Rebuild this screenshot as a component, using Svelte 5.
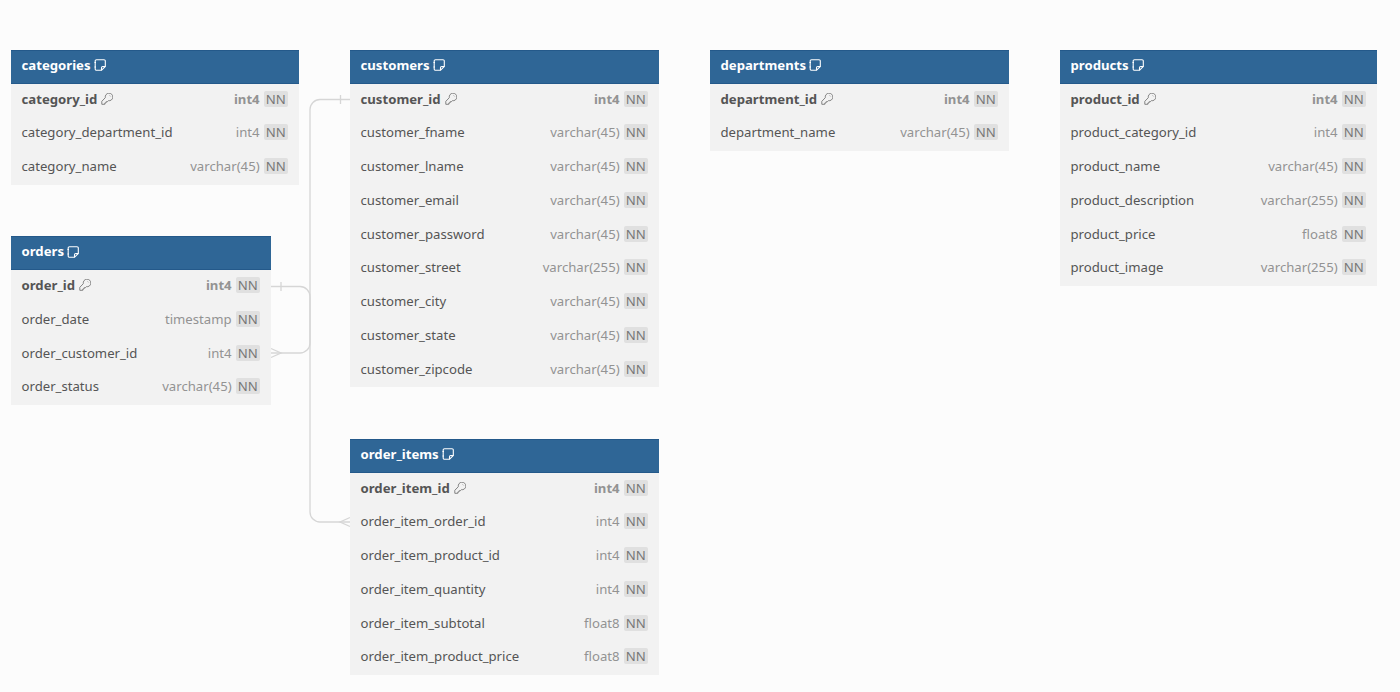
<script>
  const tables = [
    { name: 'categories', x: 11, y: 50, w: 288, rows: [
      ['category_id', 'int4', true], ['category_department_id', 'int4'], ['category_name', 'varchar(45)'] ] },
    { name: 'orders', x: 11, y: 236.4, w: 260, rows: [
      ['order_id', 'int4', true], ['order_date', 'timestamp'], ['order_customer_id', 'int4'], ['order_status', 'varchar(45)'] ] },
    { name: 'customers', x: 350, y: 50, w: 309, rows: [
      ['customer_id', 'int4', true], ['customer_fname', 'varchar(45)'], ['customer_lname', 'varchar(45)'],
      ['customer_email', 'varchar(45)'], ['customer_password', 'varchar(45)'], ['customer_street', 'varchar(255)'],
      ['customer_city', 'varchar(45)'], ['customer_state', 'varchar(45)'], ['customer_zipcode', 'varchar(45)'] ] },
    { name: 'order_items', x: 350, y: 439, w: 309, rows: [
      ['order_item_id', 'int4', true], ['order_item_order_id', 'int4'], ['order_item_product_id', 'int4'],
      ['order_item_quantity', 'int4'], ['order_item_subtotal', 'float8'], ['order_item_product_price', 'float8'] ] },
    { name: 'departments', x: 710, y: 50, w: 299, rows: [
      ['department_id', 'int4', true], ['department_name', 'varchar(45)'] ] },
    { name: 'products', x: 1060, y: 50, w: 317, rows: [
      ['product_id', 'int4', true], ['product_category_id', 'int4'], ['product_name', 'varchar(45)'],
      ['product_description', 'varchar(255)'], ['product_price', 'float8'], ['product_image', 'varchar(255)'] ] }
  ];
</script>

<div class="canvas">
  <svg class="links" width="1400" height="692" viewBox="0 0 1400 692" fill="none">
    <path d="M271 286.500H300a10 10 0 0 1 10 10V343a10 10 0 0 1-10 10H271" />
    <path d="M350 99.500H320a10 10 0 0 0-10 10V512a10 10 0 0 0 10 10H350" />
    <path d="M281 282V291M340.500 95V104" />
    <path d="M271 348.500L281 353L271 357.500M350 517.500L340 522L350 526.500" />
  </svg>

  {#each tables as t}
    <section class="table" style="left:{t.x}px;top:{t.y}px;width:{t.w}px">
      <header>
        <span class="title">{t.name}</span>
        <svg class="note" width="12" height="12" viewBox="0 0 12 12" fill="none">
          <path d="M2.500 .700H10a1.300 1.300 0 0 1 1.300 1.300V7.500L7.500 11.300H2.500A1.300 1.300 0 0 1 1.200 10V2A1.300 1.300 0 0 1 2.500 .700Z" />
          <path d="M7.500 11.300V8.700a1.200 1.200 0 0 1 1.200-1.200H11.300" />
          <path d="M.500 3.500H2M.500 8H2" />
        </svg>
      </header>
      {#each t.rows as r}
        <div class="row" class:pk={r[2]}>
          <span class="col">{r[0]}</span>
          {#if r[2]}
            <svg class="key" width="12" height="12" viewBox="0 0 12 12" fill="none">
              <path d="M4.300 4.700A3.800 3.800 0 1 1 7.300 7.700L6.200 8.800H5V10H3.800V11.300H.8V8.300Z" />
              <path d="M8.800 2.600L9.500 3.300" />
            </svg>
          {/if}
          <span class="type">{r[1]}</span>
          <span class="nn">NN</span>
        </div>
      {/each}
    </section>
  {/each}
</div>

<style>
  :global(body) {
    margin: 0;
    background: #fcfcfc;
  }
  .canvas {
    position: relative;
    width: 1400px;
    height: 692px;
    overflow: hidden;
    font-family: "Noto Sans", "Open Sans", sans-serif;
    font-size: 13.160px;
    color: #555;
  }
  .links {
    position: absolute;
    left: 0;
    top: 0;
  }
  .links path {
    stroke: #d6d6d6;
    stroke-width: 1.300;
  }
  .table {
    position: absolute;
    background: #f2f2f2;
  }
  header {
    display: flex;
    align-items: center;
    gap: 3px;
    box-sizing: border-box;
    height: 33.500px;
    padding: 0 10.500px 4px;
    background: #2f6696;
    border-top: 1px solid #24598a;
    border-bottom: 1px solid #24598a;
    color: #fff;
    font-weight: 700;
  }
  .note {
    flex: none;
    margin-top: 1px;
  }
  .note path {
    stroke: #fff;
    stroke-width: 1.100;
  }
  .row {
    display: flex;
    align-items: center;
    box-sizing: border-box;
    height: 33.750px;
    padding: 0 11px 3.400px 10.500px;
  }
  .pk {
    font-weight: 700;
  }
  .key {
    flex: none;
    margin-left: 4px;
  }
  .key path {
    stroke: #777;
    stroke-width: .9;
  }
  .type {
    margin-left: auto;
    color: #939393;
  }
  .nn {
    flex: none;
    margin-left: 4px;
    padding: 0 2.200px;
    height: 16px;
    line-height: 16px;
    border-radius: 2px;
    background: #e0e0e0;
    color: #777;
    font-weight: 400;
  }
</style>
